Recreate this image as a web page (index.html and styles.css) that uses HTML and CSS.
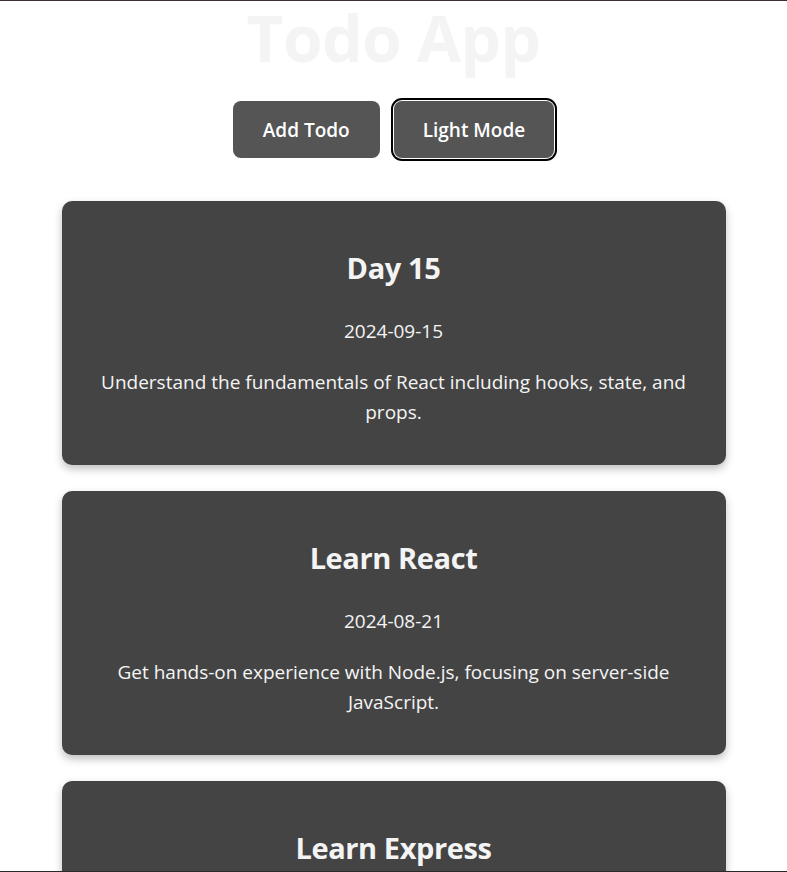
FILE: index.html
```html
<!DOCTYPE html>
<html lang="en">
<head>
<meta charset="utf-8">
<title>Todo App</title>
<link rel="stylesheet" href="styles.css">
</head>
<body>
<div class="frame-top"></div>
<main class="app">
  <h1 class="title">Todo App</h1>
  <div class="actions">
    <button class="btn btn-add">Add Todo</button>
    <button class="btn btn-focus">Light Mode</button>
  </div>
  <div class="list">
    <article class="card">
      <h2 class="card-title">Day 15</h2>
      <p class="card-date">2024-09-15</p>
      <p class="card-desc">Understand the fundamentals of React including hooks, state, and props.</p>
    </article>
    <article class="card">
      <h2 class="card-title">Learn React</h2>
      <p class="card-date">2024-08-21</p>
      <p class="card-desc">Get hands-on experience with Node.js, focusing on server-side JavaScript.</p>
    </article>
    <article class="card">
      <h2 class="card-title">Learn Express</h2>
      <p class="card-date">2024-08-25</p>
      <p class="card-desc">Build REST APIs with Express and middleware.</p>
    </article>
  </div>
</main>
<div class="frame-bottom"></div>
</body>
</html>
```

FILE: styles.css
```css
* { box-sizing: border-box; }
html, body { margin: 0; padding: 0; background: #ffffff; }
body {
  font-family: "Open Sans", "Noto Sans", "Liberation Sans", sans-serif;
  color: #f2f2f2;
}
.frame-top {
  position: fixed; top: 0; left: 0; right: 0; height: 1px;
  background: #3b3035; z-index: 10;
}
.frame-bottom {
  position: fixed; bottom: 0; left: 0; right: 0; height: 1px;
  background: #2a2a2a; z-index: 10;
}
.app {
  display: flex;
  flex-direction: column;
  align-items: center;
}
.title {
  margin: 0;
  height: 101px;
  font-size: 64px;
  line-height: 76px;
  font-weight: 700;
  color: #f4f4f4;
  letter-spacing: -0.6px;
}
.actions {
  display: flex;
  gap: 14px;
  margin-bottom: 43px;
}
.btn {
  font-family: inherit;
  font-size: 19px;
  font-weight: 600;
  color: #ffffff;
  background: #555555;
  border: none;
  border-radius: 8px;
  height: 57px;
  padding: 0 29px;
  cursor: pointer;
}
.btn-add {
  padding: 0 30px;
}
.btn-focus {
  box-shadow: 0 0 0 1px #ffffff, 0 0 0 3px #000000;
}
.list {
  display: flex;
  flex-direction: column;
  gap: 26px;
  width: 664px;
}
.card {
  background: #444444;
  border-radius: 10px;
  padding: 20px 32px;
  box-shadow: 0 4px 8px rgba(0, 0, 0, 0.25);
  text-align: center;
  display: flex;
  flex-direction: column;
}
.card-title {
  margin: 27px 0 0;
  font-size: 29px;
  line-height: 40px;
  font-weight: 700;
  letter-spacing: -0.4px;
  color: #f4f4f4;
}
.card-date {
  margin: 28px 0 0;
  font-size: 19px;
  line-height: 30px;
  color: #f4f4f4;
}
.card-desc {
  margin: 21px 0 18px;
  font-size: 19px;
  line-height: 30px;
  color: #f4f4f4;
}
```
